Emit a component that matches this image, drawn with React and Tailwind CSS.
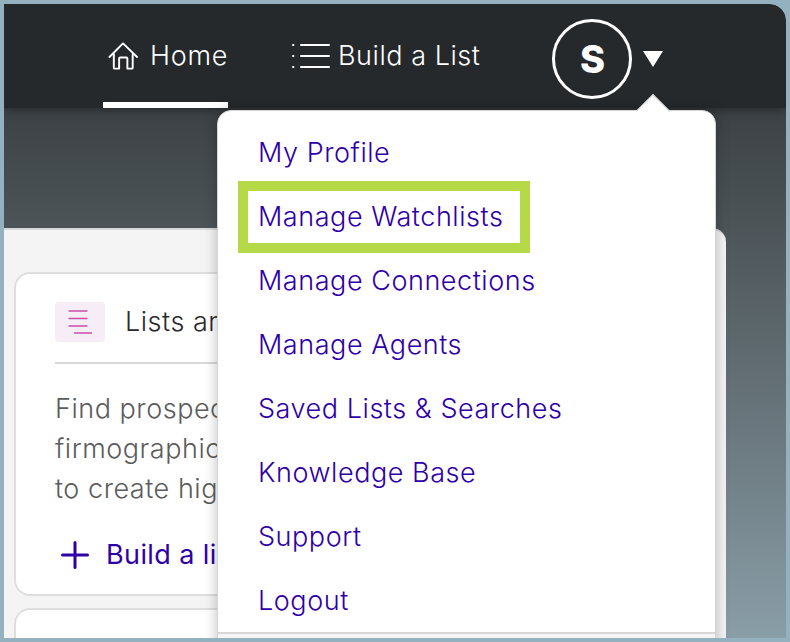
import React from 'react';

const menuItems = [
  'My Profile',
  'Manage Watchlists',
  'Manage Connections',
  'Manage Agents',
  'Saved Lists & Searches',
  'Knowledge Base',
  'Support',
  'Logout',
];

const HomeIcon = () => (
  <svg className="w-[32px] h-[30px]" viewBox="0 0 32 30" fill="none" stroke="currentColor" strokeWidth="2" strokeLinecap="round" strokeLinejoin="round">
    <path d="M1.5 16 L15.5 2 L30 16" />
    <path d="M6 13 V27 a1 1 0 0 0 1 1 H11.5 V17.5 a1 1 0 0 1 1 -1 H19 a1 1 0 0 1 1 1 V28 H24.5 a1 1 0 0 0 1 -1 V13" />
  </svg>
);

const ListIcon = () => (
  <svg className="w-[38px] h-[26px]" viewBox="0 0 38 26" fill="none" stroke="currentColor" strokeWidth="2" strokeLinecap="round">
    <path d="M1 2 h.4 M1 13 h.4 M1 24 h.4" />
    <path d="M9 2 H37 M9 13 H37 M9 24 H37" />
  </svg>
);

const PinkListIcon = () => (
  <svg className="w-[24px] h-[24px]" viewBox="0 0 24 24" fill="none" stroke="#c94fa9" strokeWidth="1.4" strokeLinecap="round">
    <path d="M1 1 H19 M1 8.5 H19 M1 16 H19 M6.5 23 H24" />
  </svg>
);

const PlusIcon = () => (
  <svg className="w-[28px] h-[28px]" viewBox="0 0 28 28" fill="none" stroke="currentColor" strokeWidth="3" strokeLinecap="round">
    <path d="M14 1.5 V26.5 M1.5 14 H26.5" />
  </svg>
);

const Dropdown = () => (
  <div className="absolute z-20 left-[213px] top-[106px] w-[499px] h-[540px] bg-white rounded-t-[14px] border border-[#d4d4d4] shadow-[0_0_14px_rgba(0,0,0,0.25)]">
    <div className="absolute left-[423px] top-[-12px] w-[24px] h-[24px] rotate-45 bg-white border-l border-t border-[#d4d4d4]" />
    <div className="relative flex flex-col pt-[10px]">
      {menuItems.map((item) => (
        <div key={item} className="h-[64px] flex items-center pl-[40px] text-[27px] font-[350] tracking-[0.55px] text-[#2f00a8]">
          {item}
        </div>
      ))}
    </div>
    <div className="absolute left-0 right-0 top-[521px] h-[2px] bg-[#d8d8d8]" />
    <div className="absolute left-0 right-0 top-[523px] bottom-0 bg-[#f5f5f5]" />
    <div className="absolute left-[20px] top-[70px] w-[292px] h-[72px] border-[10px] border-[#b6d947]" />
  </div>
);

export default function App() {
  return (
    <div className="w-[790px] h-[642px] bg-[#94b1c0] p-[4px] overflow-hidden" style={{ fontFamily: 'Inter, sans-serif' }}>
      <div className="relative w-[782px] h-[634px] bg-white rounded-tr-[16px] overflow-hidden">
        <div className="relative z-10 h-[104px] bg-[#25292c] rounded-tr-[16px] flex items-stretch pl-[99px] text-white shadow-[0_2px_8px_rgba(0,0,0,0.35)]">
          <div className="w-[125px] flex items-center pl-[5px] gap-[11px] pt-[6px] border-b-[6px] border-white">
            <HomeIcon />
            <span className="text-[27px] font-[350] tracking-[0.7px]">Home</span>
          </div>
          <div className="ml-[64px] flex items-center gap-[8px]">
            <ListIcon />
            <span className="text-[27px] font-[350] tracking-[0.55px] whitespace-nowrap">Build a List</span>
          </div>
          <div className="ml-[72px] flex items-center pt-[6px]">
            <div className="w-[80px] h-[80px] rounded-full border-[3px] border-white flex items-center justify-center text-[38px] font-extrabold">
              S
            </div>
            <div className="ml-[11px] w-0 h-0 border-l-[10px] border-r-[10px] border-t-[16px] border-l-transparent border-r-transparent border-t-white" />
          </div>
        </div>

        <div className="h-[530px] pt-[120px] pr-[60px] bg-gradient-to-b from-[#3c4144] to-[#8a9ea7]">
          <div className="w-[722px] h-[410px] bg-[#f4f4f4] border-t-2 border-[#d8d8d8] rounded-tr-[14px] pl-[10px] pt-[42px] pr-[10px] flex flex-col gap-[12px]">
            <div className="h-[324px] shrink-0 bg-white rounded-[16px] border-2 border-[#dedede] px-[39px] pt-[28px]">
              <div className="flex items-center gap-[20px] pb-[19px] border-b-2 border-[#d8d8d8]">
                <div className="w-[50px] h-[40px] rounded-[4px] bg-[#f7edf6] flex items-center justify-center">
                  <PinkListIcon />
                </div>
                <span className="text-[27px] font-[350] tracking-[0.53px] text-[#2b2b2b] whitespace-nowrap">Lists ar</span>
              </div>
              <div className="mt-[25px] text-[27px] font-[350] tracking-[0.53px] leading-[40px] text-[#5c5c5c] whitespace-nowrap">
                <div>Find prospec</div>
                <div>firmographic</div>
                <div>to create hig</div>
              </div>
              <div className="mt-[26px] flex items-center gap-[17px] pl-[6px] text-[#2f00a8] text-[27px] font-normal tracking-[0.4px] whitespace-nowrap">
                <PlusIcon />
                <span>Build a li</span>
              </div>
            </div>
            <div className="h-[60px] shrink-0 bg-white rounded-t-[16px] border-2 border-b-0 border-[#dedede]" />
          </div>
        </div>

        <Dropdown />
      </div>
    </div>
  );
}
